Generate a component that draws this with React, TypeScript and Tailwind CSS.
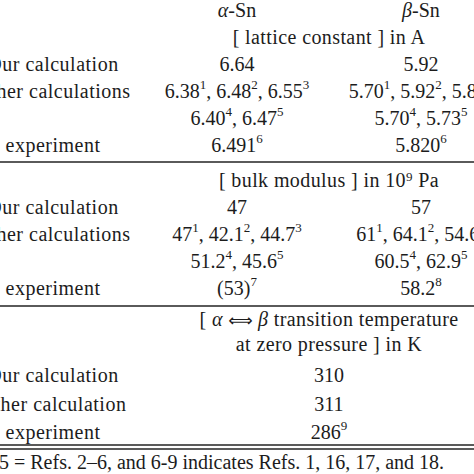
import type { ReactNode } from "react";

function Cell({ children, span }: { children?: ReactNode; span?: boolean }) {
  return (
    <div
      className={`flex items-center justify-center whitespace-nowrap ${
        span ? "col-span-2" : ""
      }`}
    >
      {children}
    </div>
  );
}

function Label({ children }: { children: ReactNode }) {
  return (
    <div className="flex items-center justify-center whitespace-nowrap tracking-[0.5px]">
      {children}
    </div>
  );
}

function S({ children }: { children: ReactNode }) {
  return <sup className="text-[13px]">{children}</sup>;
}

function Rule() {
  return <div className="h-[2px] w-full bg-[#5a5a5a]" />;
}

const row = "grid grid-cols-[184px_184px_184px]";

export default function App() {
  return (
    <div className="h-[474px] w-[474px] overflow-hidden bg-white font-['Liberation_Serif','Times_New_Roman',serif] text-[20px] text-[#1c1c1c]">
      <div className="ml-[-39px] mt-[-5px] flex w-[560px] flex-col">
        {/* lattice constant */}
        <div className={`${row} h-[27px]`}>
          <Label>{""}</Label>
          <Cell>
            <i>α</i>-Sn
          </Cell>
          <Cell>
            <i>β</i>-Sn
          </Cell>
        </div>
        <div className={`${row} h-[27px]`}>
          <Label>{""}</Label>
          <Cell span>
            <span className="tracking-[0.4px]">[ lattice constant ] in A</span>
          </Cell>
        </div>
        <div className={`${row} h-[27px]`}>
          <Label>Our calculation</Label>
          <Cell>6.64</Cell>
          <Cell>5.92</Cell>
        </div>
        <div className={`${row} h-[27px]`}>
          <Label>Other calculations</Label>
          <Cell>
            6.38<S>1</S>, 6.48<S>2</S>, 6.55<S>3</S>
          </Cell>
          <Cell>
            5.70<S>1</S>, 5.92<S>2</S>, 5.83<S>3</S>
          </Cell>
        </div>
        <div className={`${row} h-[27px]`}>
          <Label>{""}</Label>
          <Cell>
            6.40<S>4</S>, 6.47<S>5</S>
          </Cell>
          <Cell>
            5.70<S>4</S>, 5.73<S>5</S>
          </Cell>
        </div>
        <div className={`${row} h-[27px]`}>
          <Label>experiment</Label>
          <Cell>
            6.491<S>6</S>
          </Cell>
          <Cell>
            5.820<S>6</S>
          </Cell>
        </div>
        <div className="mt-[4px]">
          <Rule />
        </div>

        {/* bulk modulus */}
        <div className={`${row} mt-[2px] h-[27px]`}>
          <Label>{""}</Label>
          <Cell span>
            <span className="tracking-[0.4px]">
              [ bulk modulus ] in 10<S>9</S> Pa
            </span>
          </Cell>
        </div>
        <div className={`${row} h-[27px]`}>
          <Label>Our calculation</Label>
          <Cell>47</Cell>
          <Cell>57</Cell>
        </div>
        <div className={`${row} h-[27px]`}>
          <Label>Other calculations</Label>
          <Cell>
            47<S>1</S>, 42.1<S>2</S> , 44.7<S>3</S>
          </Cell>
          <Cell>
            61<S>1</S>, 64.1<S>2</S>, 54.6<S>3</S>
          </Cell>
        </div>
        <div className={`${row} h-[27px]`}>
          <Label>{""}</Label>
          <Cell>
            51.2<S>4</S>, 45.6<S>5</S>
          </Cell>
          <Cell>
            60.5<S>4</S>, 62.9<S>5</S>
          </Cell>
        </div>
        <div className={`${row} h-[27px]`}>
          <Label>experiment</Label>
          <Cell>
            (53)<S>7</S>
          </Cell>
          <Cell>
            58.2<S>8</S>
          </Cell>
        </div>
        <div className="mt-[5px]">
          <Rule />
        </div>

        {/* transition temperature */}
        <div className={`${row} mt-[-3px] h-[24px]`}>
          <Label>{""}</Label>
          <Cell span>
            <span className="tracking-[0.4px]">
              [ <i>α</i>{" "}
              <span className="font-['DejaVu_Sans',sans-serif] text-[17px] tracking-normal">
                ⟺
              </span>{" "}
              <i>β</i> transition temperature
            </span>
          </Cell>
        </div>
        <div className={`${row} h-[32px]`}>
          <Label>{""}</Label>
          <Cell span>
            <span className="tracking-[0.4px]">at zero pressure ] in K</span>
          </Cell>
        </div>
        <div className={`${row} h-[29px]`}>
          <Label>Our calculation</Label>
          <Cell span>310</Cell>
        </div>
        <div className={`${row} h-[28px]`}>
          <Label>Other calculation</Label>
          <Cell span>311</Cell>
        </div>
        <div className={`${row} h-[26px]`}>
          <Label>experiment</Label>
          <Cell span>
            286<S>9</S>
          </Cell>
        </div>
        <div className="mt-[1px] flex flex-col gap-[2px]">
          <Rule />
          <Rule />
        </div>
        <div className="whitespace-nowrap pl-[38px] leading-[24px]">
          5 = Refs. 2–6, and 6-9 indicates Refs. 1, 16, 17, and 18.
        </div>
      </div>
    </div>
  );
}
